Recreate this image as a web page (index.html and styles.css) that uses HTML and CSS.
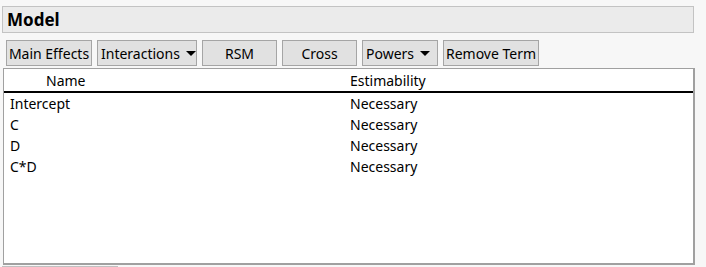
FILE: index.html
```html
<!DOCTYPE html>
<html>
<head>
<meta charset="utf-8">
<link rel="stylesheet" href="styles.css">
</head>
<body>
<div class="page">
  <div class="title-bar"><span class="title">Model</span></div>
  <div class="toolbar">
    <button class="btn w-main">Main Effects</button>
    <button class="btn w-inter dd">Interactions <span class="caret"></span></button>
    <button class="btn w-rsm">RSM</button>
    <button class="btn w-cross">Cross</button>
    <button class="btn w-pow dd">Powers <span class="caret"></span></button>
    <button class="btn w-rem">Remove Term</button>
  </div>
  <div class="table">
    <div class="row head">
      <div class="c-name head-name">Name</div>
      <div class="c-est">Estimability</div>
    </div>
    <div class="row"><div class="c-name">Intercept</div><div class="c-est">Necessary</div></div>
    <div class="row"><div class="c-name">C</div><div class="c-est">Necessary</div></div>
    <div class="row"><div class="c-name">D</div><div class="c-est">Necessary</div></div>
    <div class="row"><div class="c-name">C*D</div><div class="c-est">Necessary</div></div>
  </div>
  <div class="scroll-stub"></div>
</div>
</body>
</html>
```
FILE: styles.css
```css
html, body {
  margin: 0;
  padding: 0;
  background: #f7f7f7;
  width: 706px;
  height: 267px;
  overflow: hidden;
}
.page {
  font-family: "Noto Sans", "Open Sans", sans-serif;
  font-size: 14px;
  color: #000;
  padding: 6px 0 0 2px;
}
.title-bar {
  box-sizing: border-box;
  width: 692px;
  height: 27px;
  background: #ebebeb;
  border: 1px solid #c3c3c3;
  display: flex;
  align-items: center;
  padding-left: 4px;
}
.title {
  font-weight: bold;
  font-size: 17px;
  line-height: 1;
}
.toolbar {
  display: flex;
  gap: 5px;
  margin: 7px 0 0 4px;
  height: 26px;
}
.btn {
  box-sizing: border-box;
  height: 26px;
  background: #e1e1e1;
  border: 1px solid #a5a5a5;
  font-family: inherit;
  font-size: 14px;
  color: #000;
  padding: 0;
  display: flex;
  align-items: center;
  justify-content: center;
  gap: 6px;
  white-space: nowrap;
}
.btn.dd { justify-content: flex-start; padding-left: 3px; }
.w-main { width: 86px; }
.w-inter { width: 100px; }
.w-rsm { width: 75px; }
.w-cross { width: 75px; }
.w-pow { width: 76px; }
.w-rem { width: 96px; }
.caret {
  width: 0;
  height: 0;
  border-left: 5px solid transparent;
  border-right: 5px solid transparent;
  border-top: 5px solid #000;
}
.table {
  box-sizing: border-box;
  width: 692px;
  height: 197px;
  margin: 2px 0 0 1px;
  background: #fff;
  border: 1px solid #a0a0a0;
  border-bottom-width: 2px;
  border-right-width: 2px;
}
.row {
  display: flex;
  height: 21px;
  align-items: center;
}
.row.head {
  height: 22px;
  border-bottom: 2px solid #000;
}
.c-name {
  width: 340px;
  padding-left: 6px;
}
.head-name {
  padding-left: 42px;
  width: 304px;
}
.c-est { flex: 1; }
.scroll-stub {
  width: 116px;
  height: 2px;
  background: #c0c0c0;
  margin-top: 1px;
}
```
